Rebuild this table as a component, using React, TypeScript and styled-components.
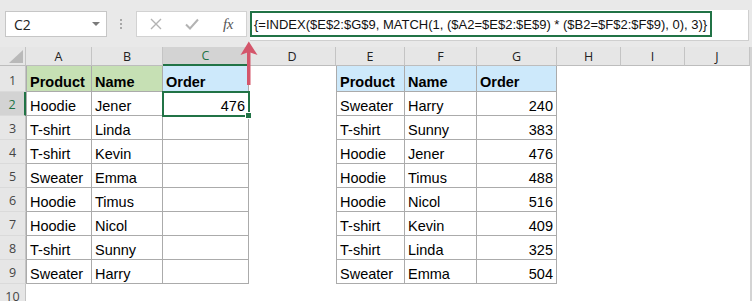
import React from "react"
import styled, { createGlobalStyle, css } from "styled-components"

const GlobalStyle = createGlobalStyle`
  html, body {
    margin: 0;
    padding: 0;
    background: #ffffff;
  }
  body {
    width: 752px;
    height: 301px;
    overflow: hidden;
    font-family: "Liberation Sans", Arial, sans-serif;
  }
`

const EXCEL_GREEN = "#217346"
const GRID_LINE = "#ababab"

const Window = styled.div`
  position: relative;
  width: 752px;
  height: 301px;
  overflow: hidden;
  background: #ffffff;
`

/* ---------- formula bar ---------- */

const Toolbar = styled.div`
  height: 47px;
  box-sizing: border-box;
  background: #e9e9e9;
  display: flex;
  align-items: flex-start;
  padding-top: 11px;
`

const NameBox = styled.div`
  margin-left: 5px;
  width: 102px;
  height: 26px;
  box-sizing: border-box;
  background: #fff;
  border: 1px solid #c6c6c6;
  display: flex;
  align-items: center;
  justify-content: space-between;
  padding: 0 6px 0 8px;
  font-family: "Open Sans", "Liberation Sans", sans-serif;
  font-size: 14px;
  color: #222;
`

const Caret = styled.span`
  width: 0;
  height: 0;
  border-left: 4px solid transparent;
  border-right: 4px solid transparent;
  border-top: 4px solid #7a7a7a;
`

const Grip = styled.div`
  width: 3px;
  margin: 8px 13px 0 13px;
  display: flex;
  flex-direction: column;
  gap: 2px;
  span {
    width: 2px;
    height: 2px;
    background: #a8a8a8;
  }
`

const ButtonBox = styled.div`
  width: 111px;
  height: 26px;
  box-sizing: border-box;
  background: #fff;
  border: 1px solid #d2d2d2;
  display: flex;
  align-items: center;
  padding-left: 13px;
`

const IconSlot = styled.div<{ w: number }>`
  width: ${p => p.w}px;
  display: flex;
  align-items: center;
  justify-content: center;
`

const Fx = styled.span`
  font-family: "Liberation Serif", "Times New Roman", serif;
  font-style: italic;
  font-size: 15px;
  color: #555;
  letter-spacing: -0.5px;
`

const FormulaArea = styled.div`
  margin-left: 3px;
  margin-top: -1px;
  width: 499px;
  height: 31px;
  box-sizing: border-box;
  background: #fff;
  border-bottom: 1px solid #cfcfcf;
  border-right: 1px solid #cfcfcf;
  padding-top: 1px;
`

const FormulaBox = styled.div`
  width: 462px;
  height: 26px;
  box-sizing: border-box;
  border: 2px solid ${EXCEL_GREEN};
  display: flex;
  align-items: center;
  padding-left: 2px;
  font-family: "Liberation Sans", Arial, sans-serif;
  font-size: 13px;
  color: #111;
  white-space: nowrap;
`

/* ---------- sheet ---------- */

const COLS = [26, 66, 71, 86, 87, 69, 72, 80, 64, 64, 65]

const Sheet = styled.div`
  display: grid;
  grid-template-columns: ${COLS.map(c => `${c}px`).join(" ")} 2px;
  grid-template-rows: 19px 26px repeat(9, 24px);
`

const ColHead = styled.div<{ $active?: boolean }>`
  background: ${p => (p.$active ? "#d3d3d3" : "#e6e6e6")};
  border-right: 1px solid #c4c4c4;
  border-bottom: ${p => (p.$active ? `2px solid ${EXCEL_GREEN}` : "1px solid #bdbdbd")};
  box-sizing: border-box;
  display: flex;
  align-items: center;
  justify-content: center;
  font-family: "Open Sans", "Liberation Sans", sans-serif;
  font-size: 12.5px;
  color: ${p => (p.$active ? EXCEL_GREEN : "#222")};
`

const Corner = styled.div`
  position: relative;
  background: #e6e6e6;
  border-right: 1px solid #c4c4c4;
  border-bottom: 1px solid #bdbdbd;
  box-sizing: border-box;
  svg {
    position: absolute;
    right: 2px;
    bottom: 2px;
  }
`

const RowHead = styled.div<{ $active?: boolean }>`
  background: ${p => (p.$active ? "#d3d3d3" : "#e6e6e6")};
  border-right: ${p => (p.$active ? `2px solid ${EXCEL_GREEN}` : "1px solid #c4c4c4")};
  border-bottom: 1px solid #dadada;
  box-sizing: border-box;
  display: flex;
  align-items: flex-end;
  justify-content: center;
  padding-bottom: 2px;
  font-family: "Open Sans", "Liberation Sans", sans-serif;
  font-size: 12.5px;
  line-height: 16px;
  color: ${p => (p.$active ? EXCEL_GREEN : "#444")};
`

const Edge = styled.div`
  background: #d4d4d4;
`

const Cell = styled.div<{
  $fill?: string
  $bold?: boolean
  $right?: boolean
  $framed?: boolean
  $first?: boolean
  $selected?: boolean
}>`
  position: relative;
  box-sizing: border-box;
  display: flex;
  align-items: flex-end;
  justify-content: ${p => (p.$right ? "flex-end" : "flex-start")};
  padding: 0 3px 0 3px;
  background: ${p => p.$fill ?? "#fff"};
  font-size: 14.5px;
  line-height: 17px;
  font-weight: ${p => (p.$bold ? 700 : 400)};
  color: #000;
  white-space: nowrap;
  ${p =>
    p.$framed &&
    css`
      border-right: 1px solid ${GRID_LINE};
      border-bottom: 1px solid ${GRID_LINE};
    `}
  ${p =>
    p.$first &&
    css`
      border-left: 1px solid ${GRID_LINE};
    `}
  ${p =>
    p.$selected &&
    css`
      z-index: 2;
      outline: 2px solid ${EXCEL_GREEN};
      outline-offset: -1px;
      &::after {
        content: "";
        position: absolute;
        right: -4px;
        bottom: -4px;
        width: 5px;
        height: 5px;
        background: ${EXCEL_GREEN};
        border: 1px solid #fff;
      }
    `}
`

const Arrow = styled.svg`
  position: absolute;
  left: 240px;
  top: 40px;
  z-index: 5;
`

const GREEN_FILL = "#c6e0b4"
const BLUE_FILL = "#cde9fb"

const left = [
  ["Product", "Name", "Order"],
  ["Hoodie", "Jener", "476"],
  ["T-shirt", "Linda", ""],
  ["T-shirt", "Kevin", ""],
  ["Sweater", "Emma", ""],
  ["Hoodie", "Timus", ""],
  ["Hoodie", "Nicol", ""],
  ["T-shirt", "Sunny", ""],
  ["Sweater", "Harry", ""],
]

const right = [
  ["Product", "Name", "Order"],
  ["Sweater", "Harry", "240"],
  ["T-shirt", "Sunny", "383"],
  ["Hoodie", "Jener", "476"],
  ["Hoodie", "Timus", "488"],
  ["Hoodie", "Nicol", "516"],
  ["T-shirt", "Kevin", "409"],
  ["T-shirt", "Linda", "325"],
  ["Sweater", "Emma", "504"],
]

const letters = ["A", "B", "C", "D", "E", "F", "G", "H", "I", "J"]

function Crossmark() {
  return (
    <svg width="12" height="12" viewBox="0 0 12 12">
      <path d="M1 1 L11 11 M11 1 L1 11" stroke="#b3b3b3" strokeWidth="1.4" fill="none" />
    </svg>
  )
}

function Checkmark() {
  return (
    <svg width="14" height="12" viewBox="0 0 14 12">
      <path d="M1 6.5 L5 10.5 L13 1.5" stroke="#b3b3b3" strokeWidth="2" fill="none" />
    </svg>
  )
}

function FormulaBar() {
  return (
    <Toolbar>
      <NameBox>
        C2
        <Caret />
      </NameBox>
      <Grip>
        <span />
        <span />
        <span />
      </Grip>
      <ButtonBox>
        <IconSlot w={12}>
          <Crossmark />
        </IconSlot>
        <IconSlot w={60}>
          <Checkmark />
        </IconSlot>
        <IconSlot w={12}>
          <Fx>fx</Fx>
        </IconSlot>
      </ButtonBox>
      <FormulaArea>
        <FormulaBox>
          {"{=INDEX($E$2:$G$9, MATCH(1, ($A2=$E$2:$E$9) * ($B2=$F$2:$F$9), 0), 3)}"}
        </FormulaBox>
      </FormulaArea>
    </Toolbar>
  )
}

function BlockCells({ rows, r, first }: { rows: string[][]; r: number; first: boolean }) {
  const row = rows[r]
  return (
    <>
      {row.map((v, i) => {
        const header = r === 0
        const fill = header ? (first && i < 2 ? GREEN_FILL : BLUE_FILL) : undefined
        return (
          <Cell
            key={i}
            $framed
            $first={i === 0}
            $bold={header}
            $fill={fill}
            $right={!header && i === 2}
            $selected={first && r === 1 && i === 2}
          >
            {v}
          </Cell>
        )
      })}
    </>
  )
}

function Grid() {
  const cells: React.ReactNode[] = []
  cells.push(
    <Corner key="corner">
      <svg width="14" height="13" viewBox="0 0 14 13">
        <polygon points="14,0 14,13 0,13" fill="#b9b9b9" />
      </svg>
    </Corner>
  )
  letters.forEach(l =>
    cells.push(
      <ColHead key={`h${l}`} $active={l === "C"}>
        {l}
      </ColHead>
    )
  )
  cells.push(<Edge key="he" />)

  for (let r = 0; r < 10; r++) {
    cells.push(
      <RowHead key={`r${r}`} $active={r === 1}>
        {r + 1}
      </RowHead>
    )
    if (r < 9) {
      cells.push(<BlockCells key={`L${r}`} rows={left} r={r} first />)
      cells.push(<Cell key={`D${r}`} />)
      cells.push(<BlockCells key={`R${r}`} rows={right} r={r} first={false} />)
      cells.push(<Cell key={`H${r}`} />, <Cell key={`I${r}`} />, <Cell key={`J${r}`} />)
    } else {
      for (let c = 0; c < 10; c++) cells.push(<Cell key={`e${c}`} />)
    }
    cells.push(<Edge key={`x${r}`} />)
  }
  return <Sheet>{cells}</Sheet>
}

export default function App() {
  return (
    <>
      <GlobalStyle />
      <Window>
        <FormulaBar />
        <Grid />
        <Arrow width="20" height="48" viewBox="0 0 20 48">
          <rect x="7" y="12" width="3.5" height="33" fill="#d4566b" />
          <polygon points="8.8,1.5 17.5,15 8.8,12 0.5,15" fill="#d4566b" />
        </Arrow>
      </Window>
    </>
  )
}
